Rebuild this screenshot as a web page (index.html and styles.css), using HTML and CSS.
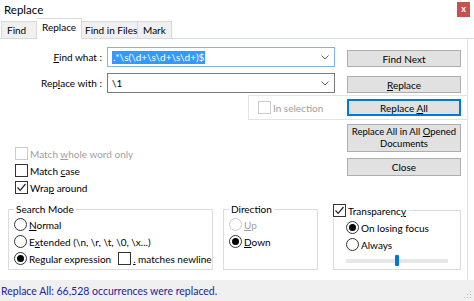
FILE: index.html
```html
<!DOCTYPE html>
<html lang="en">
<head>
  <meta charset="UTF-8">
  <title>Replace</title>
  <link rel="stylesheet" href="styles.css">
</head>
<body>

<div class="dialog">
  <div class="titlebar">
    <span class="title">Replace</span>
    <span class="close">x</span>
  </div>

  <div class="tabs">
    <span class="tab">Find</span>
    <span class="tab active">Replace</span>
    <span class="tab">Find in Files</span>
    <span class="tab">Mark</span>
  </div>

  <div class="panel">
    <div class="top-grid">
      <label class="field-label row-a"><u>F</u>ind what :</label>
      <div class="combo focused row-a">
        <span class="selected">.*\s(\d+\s\d+\s\d+)$</span>
        <svg class="chevron" width="8" height="5" viewBox="0 0 8 5"><path d="M0.5 0.5 L4 4 L7.5 0.5" fill="none" stroke="#606060"/></svg>
      </div>
      <button class="btn row-a">Find Next</button>

      <label class="field-label row-b">Rep<u>l</u>ace with :</label>
      <div class="combo row-b">
        <span>\1</span>
        <svg class="chevron" width="8" height="5" viewBox="0 0 8 5"><path d="M0.5 0.5 L4 4 L7.5 0.5" fill="none" stroke="#606060"/></svg>
      </div>
      <button class="btn row-b"><u>R</u>eplace</button>

      <div class="sel-box"></div>
      <label class="check disabled in-sel"><span class="box"></span><span>In select<u>i</u>on</span></label>
      <button class="btn default row-c">Replace <u>A</u>ll</button>
    </div>

    <div class="middle">
      <div class="options">
        <label class="check disabled"><span class="box"></span><span>Match <u>w</u>hole word only</span></label>
        <label class="check"><span class="box"></span><span>Match <u>c</u>ase</span></label>
        <label class="check"><span class="box"><svg width="11" height="11" viewBox="0 0 11 11"><path d="M1.5 5.5 L4.2 8.3 L9.5 2" fill="none" stroke="#222" stroke-width="1.2"/></svg></span><span>Wra<u>p</u> around</span></label>
      </div>
      <div class="btn-col">
        <button class="btn tall">Replace All in All <u>O</u>pened<br>Documents</button>
        <button class="btn close-btn">Close</button>
      </div>
    </div>

    <div class="groups">
      <fieldset class="group search-mode">
        <legend>Search Mode</legend>
        <label class="radio"><span class="dot"></span><span><u>N</u>ormal</span></label>
        <label class="radio"><span class="dot"></span><span>E<u>x</u>tended (\n, \r, \t, \0, \x...)</span></label>
        <div class="radio-row">
          <label class="radio"><span class="dot on"></span><span>Re<u>g</u>ular expression</span></label>
          <label class="check newline"><span class="box"></span><span><u>.</u> matches newline</span></label>
        </div>
      </fieldset>

      <fieldset class="group direction">
        <legend>Direction</legend>
        <label class="radio disabled"><span class="dot"></span><span><u>U</u>p</span></label>
        <label class="radio"><span class="dot on"></span><span><u>D</u>own</span></label>
      </fieldset>

      <fieldset class="group transparency">
        <legend><label class="check"><span class="box"><svg width="11" height="11" viewBox="0 0 11 11"><path d="M1.5 5.5 L4.2 8.3 L9.5 2" fill="none" stroke="#222" stroke-width="1.2"/></svg></span><span>Transparenc<u>y</u></span></label></legend>
        <label class="radio"><span class="dot on"></span><span>On losing focus</span></label>
        <label class="radio"><span class="dot"></span><span>Always</span></label>
        <div class="slider"><span class="track"></span><span class="thumb"></span></div>
      </fieldset>
    </div>
  </div>

  <div class="status">
    <span>Replace All: 66,528 occurrences were replaced.</span>
    <svg class="grip" width="8" height="8" viewBox="0 0 8 8"><g fill="#b8b8b8"><rect x="6" y="0" width="1" height="1"/><rect x="3" y="3" width="1" height="1"/><rect x="6" y="3" width="1" height="1"/><rect x="0" y="6" width="1" height="1"/><rect x="3" y="6" width="1" height="1"/><rect x="6" y="6" width="1" height="1"/></g></svg>
  </div>
</div>

</body>
</html>
```

FILE: styles.css
```css
* {
  box-sizing: border-box;
}
body {
  margin: 0;
  background: #ffffff;
  font-family: Lato, "Noto Sans", sans-serif;
  font-size: 10px;
  color: #000000;
}
u {
  text-decoration-thickness: 1px;
  text-underline-offset: 1px;
}
.dialog {
  width: 474px;
  height: 301px;
  display: flex;
  flex-direction: column;
  overflow: hidden;
}

/* title bar */
.titlebar {
  height: 18px;
  display: flex;
  align-items: center;
  justify-content: space-between;
  padding: 0 4px 0 4px;
}
.title {
  font-size: 11.5px;
}
.close {
  width: 13px;
  height: 15px;
  margin-top: 1px;
  background: #c75050;
  color: #ffffff;
  font-size: 9px;
  font-weight: bold;
  line-height: 14px;
  text-align: center;
}

/* tabs */
.tabs {
  height: 21px;
  display: flex;
  align-items: flex-end;
  border-bottom: 1px solid #d9d9d9;
  padding-left: 1px;
}
.tab {
  height: 18px;
  margin-bottom: -1px;
  padding: 1px 0 0 5px;
  background: #f0f0f0;
  border: 1px solid #d9d9d9;
  border-left: none;
  line-height: 15px;
  white-space: nowrap;
}
.tab:first-child {
  border-left: 1px solid #d9d9d9;
  width: 36px;
}
.tab.active {
  height: 21px;
  background: #ffffff;
  border-bottom-color: #ffffff;
  padding: 0 0 0 5px;
  line-height: 17px;
  width: 45px;
}
.tab:nth-child(3) {
  width: 56px;
  padding-left: 3px;
}
.tab:nth-child(4) {
  width: 34px;
}

/* panel */
.panel {
  width: 468px;
  height: 241px;
  border-right: 1px solid #e3e3e3;
}
.top-grid {
  margin-top: 8px;
  display: grid;
  grid-template-columns: 107px 141px 87px 12px 114px 6px;
  grid-template-rows: 20px 6px 20px 2px 25px;
}
.row-a {
  grid-row: 1;
}
.row-b {
  grid-row: 3;
}
.field-label {
  grid-column: 1;
  text-align: right;
  padding-right: 5px;
  align-self: center;
}
.combo {
  grid-column: 2 / 4;
  display: flex;
  align-items: center;
  justify-content: space-between;
  padding: 0 4px 0 4px;
  border: 1px solid #7a7a7a;
  background: #ffffff;
}
.combo.focused {
  border-color: #7eb4ea;
}
.selected {
  background: #3399ff;
  color: #ffffff;
  padding: 0 1px;
  line-height: 13px;
}
.chevron {
  margin-right: 1px;
}
.btn {
  font: inherit;
  color: #000000;
  background: #e1e1e1;
  border: 1px solid #adadad;
  padding: 0;
  height: 17px;
  line-height: 14px;
}
.top-grid .btn {
  grid-column: 5;
  align-self: end;
}
.top-grid .btn.row-c {
  grid-row: 5;
  align-self: center;
}
.btn.default {
  border: 2px solid #0078d7;
}
.sel-box {
  grid-column: 3 / 7;
  grid-row: 5;
  border: 1px solid #e3e3e3;
  border-right: none;
}
.in-sel {
  grid-column: 3;
  grid-row: 5;
  padding-left: 10px;
  align-self: center;
}

/* checkboxes and radios */
.check,
.radio {
  display: flex;
  align-items: center;
  height: 17px;
  white-space: nowrap;
}
.box {
  width: 13px;
  height: 13px;
  border: 1px solid #333333;
  background: #ffffff;
  margin-right: 2px;
  display: flex;
  align-items: center;
  justify-content: center;
  flex: none;
}
.check.disabled,
.radio.disabled {
  color: #a0a0a0;
}
.check.disabled .box,
.radio.disabled .dot {
  border-color: #cccccc;
}
.dot {
  width: 13px;
  height: 13px;
  border: 1px solid #333333;
  border-radius: 50%;
  margin-right: 2px;
  display: flex;
  align-items: center;
  justify-content: center;
  flex: none;
}
.dot.on::after {
  content: "";
  width: 7px;
  height: 7px;
  border-radius: 50%;
  background: #000000;
}

/* options and buttons */
.middle {
  display: flex;
}
.options {
  width: 347px;
  padding-left: 15px;
  margin-top: 25px;
}
.btn-col {
  width: 114px;
  margin-top: 4px;
  display: flex;
  flex-direction: column;
  gap: 6px;
}
.btn.tall {
  height: 28px;
  line-height: 12px;
  padding: 0;
  font-size: 9.5px;
  white-space: nowrap;
}
.btn.close-btn {
  height: 18px;
}

/* group boxes */
.groups {
  display: flex;
  margin-top: 7px;
}
.group {
  margin: 0;
  min-width: 0;
  height: 67px;
  border: 1px solid #dcdcdc;
  padding: 1px 4px 0 5px;
}
.group legend {
  padding: 0 2px;
}
.search-mode {
  margin-left: 8px;
  width: 205px;
}
.direction {
  margin-left: 10px;
  width: 95px;
}
.transparency {
  margin-left: 15px;
  width: 128px;
  padding-left: 12px;
}
.transparency legend {
  margin-left: -13px;
  padding: 0 3px 0 0;
}
.transparency legend .check {
  height: 15px;
}
.radio-row {
  display: flex;
}
.newline {
  margin-left: 7px;
}
.slider {
  position: relative;
  height: 14px;
  margin-top: 1px;
  width: 102px;
}
.track {
  display: block;
  position: absolute;
  top: 5px;
  left: 0;
  width: 102px;
  height: 4px;
  background: #e7e7e7;
}
.thumb {
  position: absolute;
  top: 1px;
  left: 49px;
  width: 4px;
  height: 11px;
  background: #0078d7;
  border-radius: 1px;
}

/* status bar */
.status {
  flex: 1;
  background: #f0f0f0;
  color: #24249c;
  font-size: 10.5px;
  display: flex;
  align-items: center;
  justify-content: space-between;
  padding: 0 2px 0 1px;
}
.grip {
  align-self: flex-end;
  margin-bottom: 2px;
}
```
